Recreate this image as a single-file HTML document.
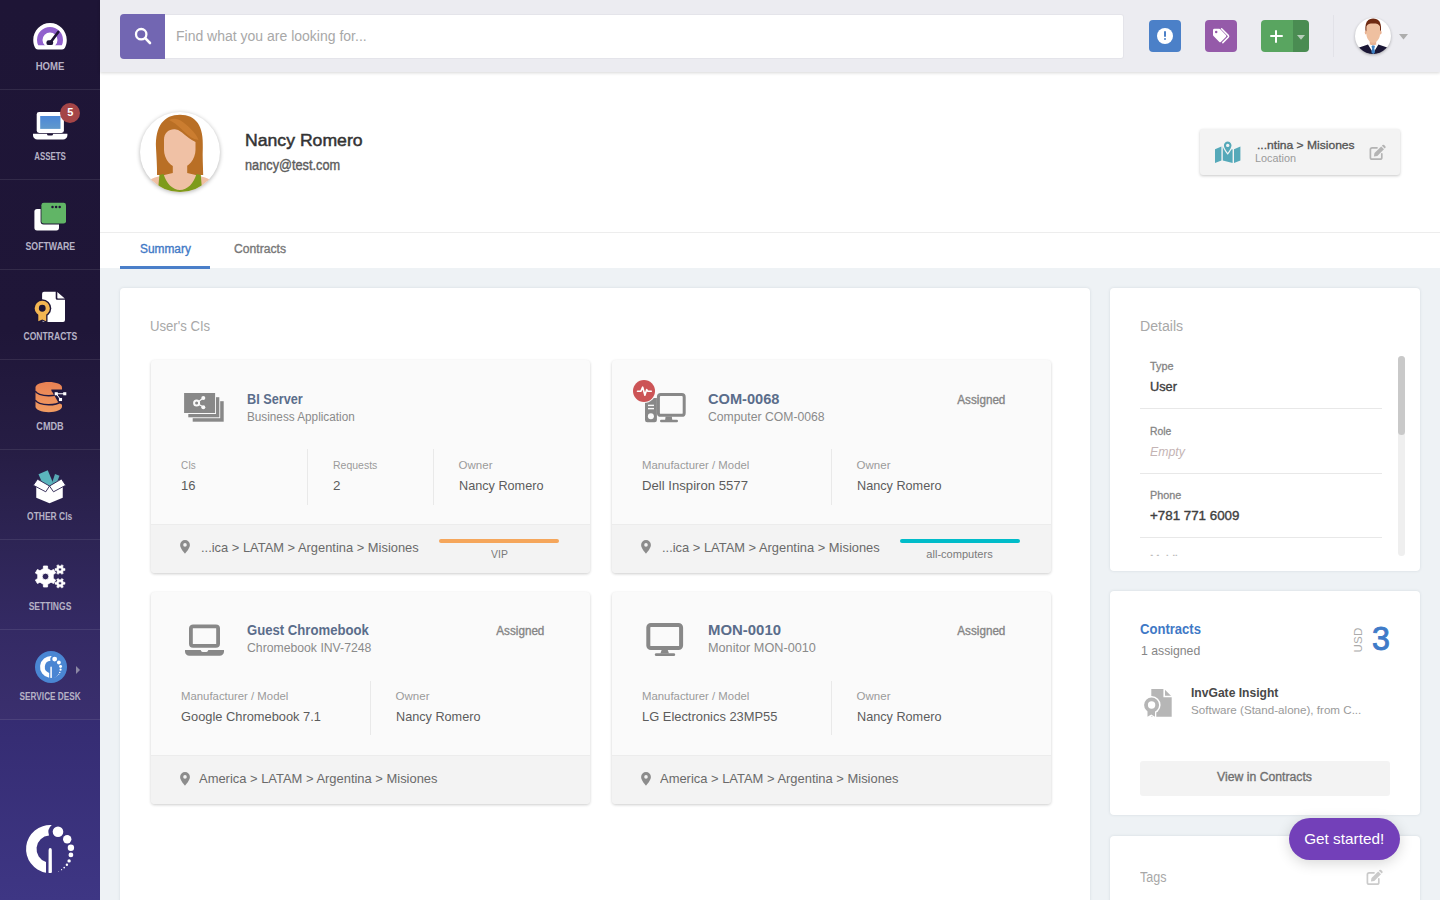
<!DOCTYPE html>
<html lang="en">
<head>
<meta charset="utf-8">
<title>Nancy Romero - Insight</title>
<style>
*{box-sizing:border-box;margin:0;padding:0}
html,body{width:1440px;height:900px;overflow:hidden}
body{font-family:"Liberation Sans",sans-serif;background:#eef2f5;color:#4a4a4a;position:relative;font-size:13px}
.t{position:absolute;white-space:nowrap;line-height:20px;height:20px;display:block}
.a{position:absolute}
svg{position:absolute;overflow:visible}
#side{position:absolute;left:0;top:0;width:100px;height:900px;background:linear-gradient(180deg,#1e1536 0px,#1f1638 330px,#261d44 450px,#2d2454 540px,#342a64 630px,#3a2f6e 719.5px,#352c72 720px,#3e3684 900px)}
.nsep{position:absolute;left:0;width:100px;height:1px;background:rgba(255,255,255,.09)}
#top{position:absolute;left:100px;top:0;width:1340px;height:72px;background:#ececf1;box-shadow:0 1px 3px rgba(0,0,0,.16)}
#head{position:absolute;left:100px;top:72px;width:1340px;height:196px;background:#fff}
.card{position:absolute;background:#fff;border-radius:4px;box-shadow:0 0 3px rgba(40,60,80,.13)}
.ci{position:absolute;width:439px;background:#fafafa;border-radius:4px;box-shadow:0 1px 3px rgba(0,0,0,.2)}
.foot{position:absolute;left:0;bottom:0;width:439px;background:#f3f3f3;border-radius:0 0 4px 4px;border-top:1px solid #ececec}
.vl{position:absolute;width:1px;background:#e9e9e9}
.hl{position:absolute;height:1px;background:#e8e8e8}
</style>
</head>
<body>
<nav>
<div id="side">
<div class="nsep" style="top:89px"></div>
<div class="nsep" style="top:179px"></div>
<div class="nsep" style="top:269px"></div>
<div class="nsep" style="top:359px"></div>
<div class="nsep" style="top:449px"></div>
<div class="nsep" style="top:539px"></div>
<div class="nsep" style="top:629px"></div>
<div class="nsep" style="top:719px"></div>
<svg style="left:33px;top:23px" width="34" height="27" viewBox="0 0 34 27">
<defs><clipPath id="hc"><rect x="0" y="0" width="34" height="22.250"/></clipPath></defs>
<path d="M17 0C7.700 0 .25 7.600 .25 17c0 2.700.6 5.200 1.700 7.500C2.500 25.700 3.600 26.500 4.900 26.500h24.200c1.300 0 2.400-.8 2.950-2C33.150 22.200 33.750 19.700 33.750 17 33.750 7.600 26.300 0 17 0z" fill="#fff"/>
<circle cx="17" cy="17" r="10.250" fill="none" stroke="#9161cd" stroke-width="5.500" clip-path="url(#hc)"/>
<path d="M17.600 19.200L25.300 9" stroke="#1e1536" stroke-width="2.700" stroke-linecap="round"/>
<rect x="13.400" y="17.200" width="6.800" height="4.900" rx="2.200" fill="#1e1536"/>
</svg>
<span class="t" style="left:35.00px;top:56.53px;font-size:10px;color:#b6b2c6;transform:scaleX(0.9567);transform-origin:50% 50%;font-weight:bold;">HOME</span>
<svg style="left:33px;top:112px" width="35" height="28" viewBox="0 0 35 28">
<defs><linearGradient id="ag" x1="0" y1="0" x2="0" y2="1"><stop offset="0" stop-color="#4c88d8"/><stop offset="1" stop-color="#6099cc"/></linearGradient></defs>
<rect x="3.700" y="0" width="27.200" height="21" rx="2.400" fill="#fff"/>
<rect x="7.200" y="4" width="20.300" height="12.900" fill="url(#ag)"/>
<path d="M0 21.800h34.400v1.400a4.400 4.400 0 0 1-4.400 4.400H4.400A4.400 4.400 0 0 1 0 23.200z" fill="#fff"/>
<path d="M14 21.600h6.100v.4a1.600 1.600 0 0 1-1.600 1.600h-2.900a1.600 1.600 0 0 1-1.600-1.600z" fill="#1e1536"/>
</svg>
<div class="a" style="left:60.100px;top:102.800px;width:19.800px;height:19.800px;border-radius:10px;background:#a54547"></div>
<span class="t" style="left:67.24px;top:102.49px;font-size:11px;color:#fff;font-weight:bold;">5</span>
<span class="t" style="left:30.00px;top:146.53px;font-size:10px;color:#b6b2c6;transform:scaleX(0.7923);transform-origin:50% 50%;font-weight:bold;">ASSETS</span>
<svg style="left:34px;top:202px" width="33" height="29" viewBox="0 0 33 29">
<rect x=".4" y="7" width="24.6" height="21.4" rx="2.6" fill="#fff"/>
<rect x="6.6" y=".2" width="25.8" height="22.2" rx="3" fill="#1e1536"/>
<rect x="7.4" y=".8" width="24.6" height="20.8" rx="2.4" fill="#61b566"/>
<circle cx="18.500" cy="5" r="1.250" fill="#1e1536"/><circle cx="22.100" cy="5" r="1.250" fill="#1e1536"/><circle cx="25.700" cy="5" r="1.250" fill="#1e1536"/>
</svg>
<span class="t" style="left:21.67px;top:236.53px;font-size:10px;color:#b6b2c6;transform:scaleX(0.8771);transform-origin:50% 50%;font-weight:bold;">SOFTWARE</span>
<svg style="left:33px;top:292px" width="34" height="31" viewBox="0 0 34 31">
<path d="M11 -.2H22.700V6.300a1.500 1.500 0 0 0 1.500 1.500H32V28.100a1.900 1.900 0 0 1-1.900 1.900H11a1.900 1.900 0 0 1-1.900-1.900V1.700A1.900 1.900 0 0 1 11-.2z" fill="#fff"/>
<path d="M24.300 -.1L31.800 6.400H24.900a.6 .6 0 0 1-.6-.6z" fill="#fff"/>
<circle cx="9.250" cy="16.250" r="9" fill="#1e1536"/>
<path d="M4 20V31.200L9.250 28.800 14.500 31.200V20z" fill="#1e1536"/>
<path d="M5.300 21V29.300L9.250 27.600 13.200 29.300V21z" fill="#f3b552"/>
<circle cx="9.250" cy="16.250" r="5.500" fill="none" stroke="#f3b552" stroke-width="4.200"/>
</svg>
<span class="t" style="left:18.61px;top:326.54px;font-size:10px;color:#b6b2c6;transform:scaleX(0.8555);transform-origin:50% 50%;font-weight:bold;">CONTRACTS</span>
<svg style="left:35px;top:382px" width="32" height="31" viewBox="0 0 32 31">
<defs><linearGradient id="cg" x1="0" y1="0" x2="0" y2="1"><stop offset="0" stop-color="#e98153"/><stop offset="1" stop-color="#f19c62"/></linearGradient></defs>
<path d="M.5 5.400C.5 2.400 6.400 0 13.750 0S27 2.400 27 5.400V24.800c0 3-5.900 5.400-13.250 5.400S.5 27.800 .5 24.800z" fill="url(#cg)"/>
<path d="M.2 9c1 2.600 6.500 4.800 13.550 4.800 3 0 5.600-.4 7.800-1M.2 18c1 2.600 6.500 4.800 13.550 4.800 5.500 0 10-1.300 12.300-3.200" fill="none" stroke="#211940" stroke-width="1.500"/>
<path d="M16.300 7.400H28.500V23.200Q23.500 21.800 21.600 17.600L17.600 10.600Q16 9 16.300 7.400z" fill="#211940"/>
<path d="M21.250 11.750H29.750M21.250 11.750L25.500 17.500" stroke="#fff" stroke-width="1"/>
<rect x="19.700" y="10.200" width="3.100" height="3.100" fill="#fff"/><rect x="28.200" y="10.200" width="3.100" height="3.100" fill="#fff"/><rect x="23.950" y="15.950" width="3.100" height="3.100" fill="#fff"/>
</svg>
<span class="t" style="left:35.00px;top:416.54px;font-size:10px;color:#b6b2c6;transform:scaleX(0.9101);transform-origin:50% 50%;font-weight:bold;">CMDB</span>
<svg style="left:34px;top:471px" width="31" height="33" viewBox="0 0 31 33">
<path d="M4.500 3.250L13.750 -.75 19.500 13 10.500 17z" fill="#5bb5bd"/>
<path d="M21 3L25.500 4.750 22.500 12.500 18 12z" fill="#58a8b5"/>
<path d="M3.750 8.500L8 10.500 8 14 3.750 12zM27.250 8.250L23 10.250 23 14 27.250 12z" fill="#ebe9f1"/>
<path d="M2.250 16L15.500 15.200 28.750 16V26.750L15.500 32.250 2.250 26.750z" fill="#fff"/>
<path d="M-.7 14.250L3.500 8.200 15.500 15 11.750 20.800z" fill="#fff" stroke="#2a214f" stroke-width=".9" stroke-linejoin="round"/>
<path d="M31.700 14.250L27.500 8 15.500 15 19.500 20.800z" fill="#fff" stroke="#2a214f" stroke-width=".9" stroke-linejoin="round"/>
</svg>
<span class="t" style="left:23.33px;top:506.54px;font-size:10px;color:#b6b2c6;transform:scaleX(0.8455);transform-origin:50% 50%;font-weight:bold;">OTHER CIs</span>
<svg style="left:0;top:540px" width="100" height="90" viewBox="0 540 100 90">
<path d="M47.69 584.20 L47.55 587.00 L43.45 587.00 L43.31 584.20 L39.93 582.24 L37.43 583.53 L35.38 579.98 L37.74 578.45 L37.74 574.55 L35.38 573.02 L37.43 569.47 L39.93 570.76 L43.31 568.80 L43.45 566.00 L47.55 566.00 L47.69 568.80 L51.07 570.76 L53.57 569.47 L55.62 573.02 L53.26 574.55 L53.26 578.45 L55.62 579.98 L53.57 583.53 L51.07 582.24Z M48.80 576.50 A3.3 3.3 0 1 0 42.20 576.50 A3.3 3.3 0 1 0 48.80 576.50Z" fill="#fff" fill-rule="evenodd" stroke="#fff" stroke-width=".8" stroke-linejoin="round"/>
<path d="M63.56 568.49 L65.01 568.52 L65.01 570.48 L63.56 570.51 L62.66 572.08 L63.35 573.35 L61.66 574.32 L60.90 573.09 L59.10 573.09 L58.34 574.32 L56.65 573.35 L57.34 572.08 L56.44 570.51 L54.99 570.48 L54.99 568.52 L56.44 568.49 L57.34 566.92 L56.65 565.65 L58.34 564.68 L59.10 565.91 L60.90 565.91 L61.66 564.68 L63.35 565.65 L62.66 566.92Z M61.45 569.50 A1.45 1.45 0 1 0 58.55 569.50 A1.45 1.45 0 1 0 61.45 569.50Z" fill="#fff" fill-rule="evenodd" stroke="#fff" stroke-width=".5" stroke-linejoin="round"/>
<path d="M63.56 582.24 L65.01 582.27 L65.01 584.23 L63.56 584.26 L62.66 585.83 L63.35 587.10 L61.66 588.07 L60.90 586.84 L59.10 586.84 L58.34 588.07 L56.65 587.10 L57.34 585.83 L56.44 584.26 L54.99 584.23 L54.99 582.27 L56.44 582.24 L57.34 580.67 L56.65 579.40 L58.34 578.43 L59.10 579.66 L60.90 579.66 L61.66 578.43 L63.35 579.40 L62.66 580.67Z M61.45 583.25 A1.45 1.45 0 1 0 58.55 583.25 A1.45 1.45 0 1 0 61.45 583.25Z" fill="#fff" fill-rule="evenodd" stroke="#fff" stroke-width=".5" stroke-linejoin="round"/>
</svg>
<span class="t" style="left:25.00px;top:596.53px;font-size:10px;color:#b6b2c6;transform:scaleX(0.8539);transform-origin:50% 50%;font-weight:bold;">SETTINGS</span>
<div class="a" style="left:35px;top:651px;width:32px;height:32px;border-radius:16px;background:#4a86d3"></div>
<svg style="left:40px;top:656px" width="22" height="22" viewBox="0 0 48 48" fill="#fff"><path d="M25.8 .07 A24 24 0 0 0 20 47.66 L20 36.9 A13.5 13.5 0 0 1 23 10.55 A9.5 9.5 0 0 1 25.8 .07Z"/>
<path d="M22.6 25.2 Q22.6 23 24.2 23 Q25.8 23 25.8 25 L25.9 47.4 Q24.2 48.3 22.5 47.7Z"/>
<circle cx="32" cy="6.8" r="5.3"/><circle cx="41.2" cy="14.2" r="4.2"/><circle cx="44.9" cy="22.8" r="3.2"/><circle cx="44.9" cy="29.9" r="2.4"/><circle cx="43.1" cy="35.9" r="1.7"/><circle cx="40.9" cy="39.7" r="1.2"/><circle cx="38.2" cy="42.6" r=".85"/><circle cx="35.6" cy="44.7" r=".6"/><circle cx="32.7" cy="46.3" r=".4"/></svg>
<svg style="left:76px;top:665.500px" width="4" height="8" viewBox="0 0 4 8"><path d="M0 0L4 4 0 8z" fill="#8c88a4"/></svg>
<span class="t" style="left:12.86px;top:686.53px;font-size:10px;color:#b6b2c6;transform:scaleX(0.8225);transform-origin:50% 50%;font-weight:bold;">SERVICE DESK</span>
<svg style="left:26px;top:825px" width="48" height="48" viewBox="0 0 48 48" fill="#fff"><path d="M25.8 .07 A24 24 0 0 0 20 47.66 L20 36.9 A13.5 13.5 0 0 1 23 10.55 A9.5 9.5 0 0 1 25.8 .07Z"/>
<path d="M22.6 25.2 Q22.6 23 24.2 23 Q25.8 23 25.8 25 L25.9 47.4 Q24.2 48.3 22.5 47.7Z"/>
<circle cx="32" cy="6.8" r="5.3"/><circle cx="41.2" cy="14.2" r="4.2"/><circle cx="44.9" cy="22.8" r="3.2"/><circle cx="44.9" cy="29.9" r="2.4"/><circle cx="43.1" cy="35.9" r="1.7"/><circle cx="40.9" cy="39.7" r="1.2"/><circle cx="38.2" cy="42.6" r=".85"/><circle cx="35.6" cy="44.7" r=".6"/><circle cx="32.7" cy="46.3" r=".4"/></svg>
</div>
</nav>
<section>
<div id="head"></div>
<div class="a" style="left:100px;top:232px;width:1340px;height:1px;background:#ededed"></div>
<div class="a" style="left:120px;top:266px;width:90px;height:2.500px;background:#4a7fc9"></div>
<div class="a" style="left:140px;top:111.500px;width:80px;height:80px;border-radius:40px;background:#fff;box-shadow:0 1px 4px rgba(0,0,0,.3);overflow:hidden">
<svg style="left:0;top:0" width="80" height="80" viewBox="0 0 80 80">
<path d="M16 36C15 14 24 2.800 40 2.800S64 14 62.800 36c-.4 8 .2 18 .4 27H17c.2-9-.6-19-1-27z" fill="#b96f25"/>
<path d="M10 67.500c6-3 14-4.500 22.800-6.500V50h14.400v11c8.800 2 16.800 3.500 22.800 6.500L74 84H6z" fill="#efc0a4"/>
<path d="M19.400 63c3-.8 3.600-.9 4.200-1 2.400 9 9 16 16.400 16s14-7 16.400-16l4.400 1L62.500 84h-45z" fill="#7e9b1b"/>
<path d="M24 28C24 20 30 16.500 36 17.500c6 1 9 7.500 19.500 12.500v8c0 9-7 18-15.700 18S24 47 24 38z" fill="#f0c1a5"/>
<path d="M29 8c4-2 9-1.500 13 1.500S56 20 58.500 28c-6-1-10-4-14-8S34 10 29 8z" fill="#cb7d30"/>
</svg></div>
<span class="t" style="left:245.38px;top:130.61px;font-size:17px;color:#333;transform:scaleX(1.0372);transform-origin:0 50%;-webkit-text-stroke:0.48px #333;">Nancy Romero</span>
<span class="t" style="left:245.35px;top:155.15px;font-size:14px;color:#5c5c5c;transform:scaleX(0.9101);transform-origin:0 50%;-webkit-text-stroke:0.39px #5c5c5c;">nancy@test.com</span>
<span class="t" style="left:139.58px;top:238.67px;font-size:12.5px;color:#3f79c6;transform:scaleX(0.9513);transform-origin:0 50%;-webkit-text-stroke:0.35px #3f79c6;">Summary</span>
<span class="t" style="left:234.27px;top:238.67px;font-size:12.5px;color:#777;transform:scaleX(0.9717);transform-origin:0 50%;-webkit-text-stroke:0.35px #777;">Contracts</span>
<div class="a" style="left:1200px;top:129px;width:200px;height:46px;border-radius:3px;background:#f3f3f3;box-shadow:0 1px 3px rgba(0,0,0,.22)"></div>
<svg style="left:1214.500px;top:141px" width="26" height="22" viewBox="0 0 26 22">
<path d="M0 8.200l6.400-2.600V19.400L0 22zM25.400 5.600L19 8.200V22l6.400-2.600zM7.800 5.400V19.600l9.800 2.400V8.200l-3 .2-1.900 3.400-2-3.800z" fill="#55a9b9"/>
<path d="M12.700 0a4.400 4.400 0 0 0-4.400 4.400c0 2.700 4.400 8.400 4.400 8.400s4.400-5.700 4.400-8.400A4.400 4.400 0 0 0 12.700 0z" fill="#55a9b9" stroke="#f3f3f3" stroke-width="1.200"/>
<circle cx="12.700" cy="4.400" r="1.700" fill="#f3f3f3"/>
</svg>
<span class="t" style="left:1256.58px;top:135.32px;font-size:11.5px;color:#555;transform:scaleX(1.0495);transform-origin:0 50%;-webkit-text-stroke:0.32px #555;">...ntina &gt; Misiones</span>
<span class="t" style="left:1255.22px;top:148.46px;font-size:10.5px;color:#9a9a9a;transform:scaleX(1.0312);transform-origin:0 50%;">Location</span>
<svg style="left:1368.6px;top:143.5px" width="17" height="17" viewBox="0 0 17 17"><path d="M12.800 9.800V13.400a1.800 1.800 0 0 1-1.800 1.800H3.200A1.800 1.800 0 0 1 1.400 13.400V5.600A1.800 1.800 0 0 1 3.200 3.800H8" fill="none" stroke="#b4b4b4" stroke-width="1.700" stroke-linecap="round"/><g transform="translate(-.9 .5)"><path d="M6.400 8.600l6.700-6.700 2.800 2.800-6.700 6.700-3.400 .6z" fill="#b4b4b4"/><path d="M13.800 1.200l.6-.6a1.200 1.200 0 0 1 1.700 0l1.100 1.100a1.200 1.200 0 0 1 0 1.700l-.6 .6z" fill="#b4b4b4"/></g></svg>
</section>
<header>
<div id="top"></div>
<div class="a" style="left:120px;top:13.5px;width:45px;height:45px;background:#7266b2;border-radius:4px 0 0 4px"></div>
<div class="a" style="left:165px;top:13.5px;width:959px;height:45px;background:#fff;border-radius:0 3px 3px 0;border:1px solid #e4e4ea;border-left:0"></div>
<svg style="left:134px;top:27px" width="18" height="18" viewBox="0 0 18 18"><circle cx="7.200" cy="7.200" r="5.200" fill="none" stroke="#fff" stroke-width="2.300"/><path d="M11.200 11.200L16 16" stroke="#fff" stroke-width="2.600" stroke-linecap="round"/></svg>
<span class="t" style="left:176.01px;top:25.65px;font-size:14px;color:#a8a8a8;">Find what you are looking for...</span>
<div class="a" style="left:1149px;top:20px;width:32px;height:32px;border-radius:4px;background:#4b80c8"></div>
<div class="a" style="left:1156.500px;top:27.700px;width:16.500px;height:16.500px;border-radius:9px;background:#fff"></div>
<div class="a" style="left:1163.900px;top:31.300px;width:1.900px;height:6px;border-radius:1px;background:#4b80c8"></div>
<div class="a" style="left:1163.800px;top:38.400px;width:2.100px;height:2.100px;border-radius:1.100px;background:#4b80c8"></div>
<div class="a" style="left:1205px;top:20px;width:32px;height:32px;border-radius:4px;background:#955aa9"></div>
<svg style="left:1212px;top:28px" width="18" height="16" viewBox="0 0 18 16">
<path d="M9.600 .8l6.600 6.600a1.300 1.300 0 0 1 0 1.800l-5.400 5.400" fill="none" stroke="#fff" stroke-width="1.500" stroke-linecap="round"/>
<path d="M1 2.200A1.400 1.400 0 0 1 2.400 .8h4.800a1.600 1.600 0 0 1 1.100 .5l5.600 5.600a1.400 1.400 0 0 1 0 2l-4.800 4.800a1.400 1.400 0 0 1-2 0L1.500 8.100A1.600 1.600 0 0 1 1 7z" fill="#fff"/>
<circle cx="4.200" cy="4" r="1.250" fill="#955aa9"/>
</svg>
<div class="a" style="left:1261px;top:20px;width:32px;height:32px;border-radius:4px 0 0 4px;background:#59a560"></div>
<div class="a" style="left:1293px;top:20px;width:16px;height:32px;border-radius:0 4px 4px 0;background:#4a8c52"></div>
<div class="a" style="left:1269.800px;top:35px;width:13px;height:2.200px;background:#fff;border-radius:1px"></div>
<div class="a" style="left:1275.200px;top:29.600px;width:2.200px;height:13px;background:#fff;border-radius:1px"></div>
<svg style="left:1297px;top:34.600px" width="8" height="5" viewBox="0 0 8 5"><path d="M0 0h8L4 4.800z" fill="#b5cdb9"/></svg>
<div class="a" style="left:1333px;top:15px;width:1px;height:42px;background:#e2e2e8"></div>
<div class="a" style="left:1355.300px;top:17.500px;width:36px;height:36px;border-radius:18px;background:#fff;box-shadow:0 1px 3px rgba(0,0,0,.28);overflow:hidden">
<svg style="left:0;top:0" width="36" height="36" viewBox="0 0 36 36">
<path d="M12.200 27l5.800 2 5.800-2 1 9H11z" fill="#fff"/>
<rect x="14.800" y="21" width="6.400" height="6.500" fill="#e8b394"/>
<path d="M10.400 12C10 4 13 .6 18.200 .6S26.400 4 26 12l-.6 3H11z" fill="#6f2a12"/>
<ellipse cx="10.900" cy="14.600" rx="1.100" ry="2" fill="#e8b394"/><ellipse cx="25.500" cy="14.600" rx="1.100" ry="2" fill="#e8b394"/>
<path d="M11.400 8.500C12.500 6 14.500 5.600 18.200 5.600s5.700 .4 6.800 2.900v7.500c0 4.500-3.300 8.800-6.800 8.800s-6.800-4.300-6.800-8.800z" fill="#efc0a0"/>
<path d="M3.400 29.800l9.600-3.200 5.200 8.400 5.200-8.400 9.600 3.200L36 40H0z" fill="#1b1736"/>
<path d="M14.800 26.400l3.400 1.200 3.400-1.200-3.400 9z" fill="#fff"/>
<path d="M17 27.400h2.400l.6 1.600-.8 1 .9 4.200-1.900 2-1.900-2 .9-4.200-.8-1z" fill="#3f82c4"/>
</svg></div>
<svg style="left:1399px;top:33.600px" width="9" height="6" viewBox="0 0 9 6"><path d="M0 0h9L4.500 5.600z" fill="#adadad"/></svg>
</header>
<main>
<div class="card" style="left:120px;top:288px;width:970px;height:640px"></div>
<span class="t" style="left:150.34px;top:316.45px;font-size:14px;color:#a8a8a8;transform:scaleX(0.9385);transform-origin:0 50%;">User&#x27;s CIs</span>
<div class="ci" style="left:151px;top:360px;height:213px"><div class="foot" style="height:49.2px"></div></div>
<svg style="left:184px;top:393px" width="40" height="29" viewBox="0 0 40 29">
<rect x="8.700" y="8.200" width="31" height="20.500" fill="#888"/>
<rect x="3.300" y="3.200" width="32.900" height="22" fill="#fafafa"/>
<rect x="4.300" y="4.200" width="31" height="20.100" fill="#888"/>
<rect x="-.9" y="-1" width="32.900" height="22" fill="#fafafa"/>
<rect x=".1" y="0" width="31" height="20" fill="#888"/>
<path d="M12.600 10L19.300 5M12.600 10L19.300 14" stroke="#fafafa" stroke-width="1.100"/>
<circle cx="12.600" cy="10" r="2.500" fill="#888" stroke="#fafafa" stroke-width="2"/>
<circle cx="19.300" cy="5" r="2" fill="#fafafa"/><circle cx="19.300" cy="14.200" r="2" fill="#fafafa"/>
</svg>
<span class="t" style="left:246.86px;top:389.45px;font-size:14px;color:#5a6d8b;transform:scaleX(0.9073);transform-origin:0 50%;font-weight:bold;">BI Server</span>
<span class="t" style="left:246.59px;top:407.44px;font-size:12px;color:#8a8a8a;transform:scaleX(0.9784);transform-origin:0 50%;">Business Application</span>
<span class="t" style="left:180.65px;top:454.52px;font-size:11.5px;color:#9a9a9a;transform:scaleX(0.8583);transform-origin:0 50%;">CIs</span>
<span class="t" style="left:181.05px;top:476.12px;font-size:13.5px;color:#5c5c5c;transform:scaleX(0.9620);transform-origin:0 50%;">16</span>
<div class="vl" style="left:306.500px;top:449px;height:56px"></div><div class="vl" style="left:432.500px;top:449px;height:56px"></div>
<span class="t" style="left:332.63px;top:454.52px;font-size:11.5px;color:#9a9a9a;transform:scaleX(0.9119);transform-origin:0 50%;">Requests</span>
<span class="t" style="left:332.53px;top:476.12px;font-size:13.5px;color:#5c5c5c;transform:scaleX(0.9916);transform-origin:0 50%;">2</span>
<span class="t" style="left:458.60px;top:454.52px;font-size:11.5px;color:#9a9a9a;">Owner</span>
<span class="t" style="left:458.56px;top:476.12px;font-size:13.5px;color:#5c5c5c;transform:scaleX(0.9380);transform-origin:0 50%;">Nancy Romero</span>
<svg style="left:180.4px;top:540.3px" width="10" height="14" viewBox="0 0 10 14"><path d="M5 0A4.900 4.900 0 0 0 .1 4.900C.1 8.400 5 13.600 5 13.600s4.900-5.200 4.900-8.700A4.900 4.900 0 0 0 5 0zm0 6.700a1.800 1.800 0 1 1 0-3.600 1.800 1.800 0 0 1 0 3.600z" fill="#8c8c8c" fill-rule="evenodd"/></svg>
<span class="t" style="left:201.05px;top:537.82px;font-size:13.5px;color:#6a6a6a;transform:scaleX(0.9550);transform-origin:0 50%;">...ica &gt; LATAM &gt; Argentina &gt; Misiones</span>
<div class="a" style="left:439px;top:539px;width:120px;height:4px;border-radius:2px;background:#f5a65b"></div>
<span class="t" style="left:490.54px;top:544.16px;font-size:10.5px;color:#7a7a7a;transform:scaleX(0.9888);transform-origin:50% 50%;">VIP</span>
<div class="ci" style="left:612px;top:360px;height:213px"><div class="foot" style="height:49.2px"></div></div>
<svg style="left:645px;top:393px" width="41" height="30" viewBox="0 0 41 30">
<rect x="13.400" y="1.500" width="25.800" height="20.800" rx="2.400" fill="none" stroke="#888" stroke-width="3"/>
<path d="M20.600 23.500h6.200l.5 3.400h-7.200z" fill="#888"/>
<rect x="15" y="26.700" width="18" height="2.600" rx="1.300" fill="#888"/>
<path d="M0 7.500A2.500 2.500 0 0 1 2.500 5H11.900V27A2.300 2.300 0 0 1 9.600 29.300H2.300A2.300 2.300 0 0 1 0 27z" fill="#888"/>
<rect x="3" y="11.700" width="6" height="1.400" fill="#fafafa"/><rect x="3" y="14.900" width="6" height="1.400" fill="#fafafa"/>
<circle cx="5.900" cy="23.300" r="3" fill="#fafafa"/>
</svg>
<div class="a" style="left:631.700px;top:378.900px;width:24px;height:24px;border-radius:12px;background:#fafafa"></div>
<div class="a" style="left:632.700px;top:379.900px;width:22px;height:22px;border-radius:11px;background:#cc5456"></div>
<svg style="left:636.500px;top:385px" width="15" height="12" viewBox="0 0 15 12"><path d="M.5 6.300H3.800L5.700 2.200 7.900 10.300 9.700 4.600 10.900 6.300H14.300" fill="none" stroke="#fff" stroke-width="1.600" stroke-linejoin="round" stroke-linecap="round"/></svg>
<span class="t" style="left:707.69px;top:389.45px;font-size:14px;color:#5a6d8b;transform:scaleX(1.0440);transform-origin:0 50%;font-weight:bold;">COM-0068</span>
<span class="t" style="left:707.77px;top:407.44px;font-size:12px;color:#8a8a8a;transform:scaleX(1.0168);transform-origin:0 50%;">Computer COM-0068</span>
<span class="t" style="left:955.54px;top:390.04px;font-size:12px;color:#858585;transform:scaleX(0.9732);transform-origin:100% 50%;-webkit-text-stroke:0.34px #858585;">Assigned</span>
<span class="t" style="left:641.60px;top:454.52px;font-size:11.5px;color:#9a9a9a;transform:scaleX(0.9875);transform-origin:0 50%;">Manufacturer / Model</span>
<span class="t" style="left:641.54px;top:476.12px;font-size:13.5px;color:#5c5c5c;transform:scaleX(0.9736);transform-origin:0 50%;">Dell Inspiron 5577</span>
<div class="vl" style="left:830.500px;top:449px;height:56px"></div>
<span class="t" style="left:856.60px;top:454.52px;font-size:11.5px;color:#9a9a9a;">Owner</span>
<span class="t" style="left:856.56px;top:476.12px;font-size:13.5px;color:#5c5c5c;transform:scaleX(0.9380);transform-origin:0 50%;">Nancy Romero</span>
<svg style="left:641.4px;top:540.3px" width="10" height="14" viewBox="0 0 10 14"><path d="M5 0A4.900 4.900 0 0 0 .1 4.900C.1 8.400 5 13.600 5 13.600s4.900-5.200 4.900-8.700A4.900 4.900 0 0 0 5 0zm0 6.700a1.800 1.800 0 1 1 0-3.600 1.800 1.800 0 0 1 0 3.600z" fill="#8c8c8c" fill-rule="evenodd"/></svg>
<span class="t" style="left:662.05px;top:537.82px;font-size:13.5px;color:#6a6a6a;transform:scaleX(0.9550);transform-origin:0 50%;">...ica &gt; LATAM &gt; Argentina &gt; Misiones</span>
<div class="a" style="left:900px;top:539px;width:120px;height:4px;border-radius:2px;background:#00bcc9"></div>
<span class="t" style="left:928.49px;top:544.16px;font-size:10.5px;color:#7a7a7a;transform:scaleX(1.0526);transform-origin:50% 50%;">all-computers</span>
<div class="ci" style="left:151px;top:592px;height:212px"><div class="foot" style="height:49.2px"></div></div>
<svg style="left:185px;top:624px" width="39" height="32" viewBox="0 0 39 32">
<rect x="5.900" y="2.300" width="27.200" height="19.600" rx="2.200" fill="none" stroke="#888" stroke-width="3.800"/>
<path d="M0 25.900H15.600Q16.300 28 17.600 28H21.400Q22.700 28 23.400 25.900H39V27.400A4.300 4.300 0 0 1 34.700 31.700H4.300A4.300 4.300 0 0 1 0 27.400z" fill="#888"/>
</svg>
<span class="t" style="left:246.54px;top:620.45px;font-size:14px;color:#5a6d8b;transform:scaleX(0.9375);transform-origin:0 50%;font-weight:bold;">Guest Chromebook</span>
<span class="t" style="left:246.57px;top:638.04px;font-size:12px;color:#8a8a8a;transform:scaleX(1.0186);transform-origin:0 50%;">Chromebook INV-7248</span>
<span class="t" style="left:495.04px;top:621.14px;font-size:12px;color:#858585;transform:scaleX(0.9732);transform-origin:100% 50%;-webkit-text-stroke:0.34px #858585;">Assigned</span>
<span class="t" style="left:180.60px;top:685.62px;font-size:11.5px;color:#9a9a9a;transform:scaleX(0.9875);transform-origin:0 50%;">Manufacturer / Model</span>
<span class="t" style="left:180.55px;top:707.42px;font-size:13.5px;color:#5c5c5c;transform:scaleX(0.9514);transform-origin:0 50%;">Google Chromebook 7.1</span>
<div class="vl" style="left:370px;top:680.500px;height:54.500px"></div>
<span class="t" style="left:395.60px;top:685.62px;font-size:11.5px;color:#9a9a9a;">Owner</span>
<span class="t" style="left:395.56px;top:707.42px;font-size:13.5px;color:#5c5c5c;transform:scaleX(0.9380);transform-origin:0 50%;">Nancy Romero</span>
<svg style="left:180.4px;top:771.5px" width="10" height="14" viewBox="0 0 10 14"><path d="M5 0A4.900 4.900 0 0 0 .1 4.900C.1 8.400 5 13.600 5 13.600s4.900-5.200 4.900-8.700A4.900 4.900 0 0 0 5 0zm0 6.700a1.800 1.800 0 1 1 0-3.600 1.800 1.800 0 0 1 0 3.600z" fill="#8c8c8c" fill-rule="evenodd"/></svg>
<span class="t" style="left:198.55px;top:769.12px;font-size:13.5px;color:#6a6a6a;transform:scaleX(0.9580);transform-origin:0 50%;">America &gt; LATAM &gt; Argentina &gt; Misiones</span>
<div class="ci" style="left:612px;top:592px;height:212px"><div class="foot" style="height:49.2px"></div></div>
<svg style="left:646px;top:623px" width="38" height="34" viewBox="0 0 38 34">
<rect x="2.300" y="2" width="32.800" height="23" rx="2.600" fill="none" stroke="#888" stroke-width="4"/>
<path d="M15.800 26.500h5.800l1.400 4h-8.600z" fill="#888"/>
<rect x="8.800" y="30.200" width="20.400" height="2.900" rx="1.450" fill="#888"/>
</svg>
<span class="t" style="left:707.68px;top:620.45px;font-size:14px;color:#5a6d8b;transform:scaleX(1.0659);transform-origin:0 50%;font-weight:bold;">MON-0010</span>
<span class="t" style="left:707.76px;top:638.04px;font-size:12px;color:#8a8a8a;transform:scaleX(1.0569);transform-origin:0 50%;">Monitor MON-0010</span>
<span class="t" style="left:955.54px;top:621.14px;font-size:12px;color:#858585;transform:scaleX(0.9732);transform-origin:100% 50%;-webkit-text-stroke:0.34px #858585;">Assigned</span>
<span class="t" style="left:641.60px;top:685.62px;font-size:11.5px;color:#9a9a9a;transform:scaleX(0.9875);transform-origin:0 50%;">Manufacturer / Model</span>
<span class="t" style="left:641.55px;top:707.42px;font-size:13.5px;color:#5c5c5c;transform:scaleX(0.9551);transform-origin:0 50%;">LG Electronics 23MP55</span>
<div class="vl" style="left:830.500px;top:680.500px;height:54.500px"></div>
<span class="t" style="left:856.60px;top:685.62px;font-size:11.5px;color:#9a9a9a;">Owner</span>
<span class="t" style="left:856.56px;top:707.42px;font-size:13.5px;color:#5c5c5c;transform:scaleX(0.9380);transform-origin:0 50%;">Nancy Romero</span>
<svg style="left:641.4px;top:771.5px" width="10" height="14" viewBox="0 0 10 14"><path d="M5 0A4.900 4.900 0 0 0 .1 4.900C.1 8.400 5 13.600 5 13.600s4.900-5.200 4.900-8.700A4.900 4.900 0 0 0 5 0zm0 6.700a1.800 1.800 0 1 1 0-3.600 1.800 1.800 0 0 1 0 3.600z" fill="#8c8c8c" fill-rule="evenodd"/></svg>
<span class="t" style="left:659.55px;top:769.12px;font-size:13.5px;color:#6a6a6a;transform:scaleX(0.9580);transform-origin:0 50%;">America &gt; LATAM &gt; Argentina &gt; Misiones</span>
</main>
<aside>
<div class="card" style="left:1110px;top:288px;width:310px;height:282.500px"></div>
<span class="t" style="left:1140.31px;top:316.45px;font-size:14px;color:#a8a8a8;transform:scaleX(1.0090);transform-origin:0 50%;">Details</span>
<div class="a" style="left:1398px;top:356px;width:7px;height:199.500px;border-radius:3.500px;background:#efefef"></div>
<div class="a" style="left:1398px;top:356px;width:7px;height:79px;border-radius:3.500px;background:#c9c9c9"></div>
<span class="t" style="left:1150.12px;top:356.09px;font-size:11px;color:#858585;transform:scaleX(0.9842);transform-origin:0 50%;-webkit-text-stroke:0.31px #858585;">Type</span>
<span class="t" style="left:1150.05px;top:377.30px;font-size:13px;color:#404040;transform:scaleX(0.9804);transform-origin:0 50%;-webkit-text-stroke:0.36px #404040;">User</span>
<div class="hl" style="left:1140px;top:408px;width:242px"></div>
<span class="t" style="left:1150.14px;top:420.79px;font-size:11px;color:#858585;transform:scaleX(0.9402);transform-origin:0 50%;-webkit-text-stroke:0.31px #858585;">Role</span>
<span class="t" style="left:1150.07px;top:442.10px;font-size:13px;color:#c4b4b4;transform:scaleX(0.9476);transform-origin:0 50%;font-style:italic;">Empty</span>
<div class="hl" style="left:1140px;top:472.500px;width:242px"></div>
<span class="t" style="left:1150.12px;top:485.39px;font-size:11px;color:#858585;transform:scaleX(0.9831);transform-origin:0 50%;-webkit-text-stroke:0.31px #858585;">Phone</span>
<span class="t" style="left:1150.03px;top:506.30px;font-size:13px;color:#404040;transform:scaleX(1.0263);transform-origin:0 50%;-webkit-text-stroke:0.36px #404040;">+781 771 6009</span>
<div class="hl" style="left:1140px;top:537px;width:242px"></div>
<div class="a" style="left:1140px;top:553px;width:240px;height:3px;overflow:hidden"><span class="t" style="left:10.10px;top:-3.78px;font-size:11.5px;color:#bcbcbc;-webkit-text-stroke:0.32px #bcbcbc;">Mobile</span>
</div>
<div class="card" style="left:1110px;top:590.500px;width:310px;height:224px"></div>
<span class="t" style="left:1139.94px;top:618.65px;font-size:14px;color:#3f79c6;transform:scaleX(0.9332);transform-origin:0 50%;font-weight:bold;">Contracts</span>
<span class="t" style="left:1140.57px;top:641.00px;font-size:13px;color:#868686;transform:scaleX(0.9416);transform-origin:0 50%;">1 assigned</span>
<span class="t" style="left:1338.6px;top:629.6px;width:38px;text-align:center;font-size:11.5px;color:#ababab;transform:rotate(-90deg);transform-origin:50% 50%;letter-spacing:.2px">USD</span>
<span class="t" style="left:1371.87px;top:628.57px;font-size:33px;color:#3f7bc8;transform:scaleX(0.9759);transform-origin:0 50%;-webkit-text-stroke:0.92px #3f7bc8;">3</span>
<svg style="left:1143px;top:688.500px" width="30" height="29" viewBox="0 0 30 29">
<path d="M8.300 0H21.200L28.700 7.500V27.700H8.300z" fill="#b6b6b6"/>
<path d="M21.200 -.5V7.500H29.200" fill="none" stroke="#fff" stroke-width="1.600"/>
<circle cx="8.600" cy="16" r="9" fill="#fff"/>
<path d="M3.200 20V29.800L8.250 27 13.300 29.800V20z" fill="#fff"/>
<path d="M4.500 21V27.800L8.250 25.600 12 27.800V21z" fill="#b6b6b6"/>
<circle cx="8.600" cy="16" r="5.600" fill="none" stroke="#b6b6b6" stroke-width="3.800"/>
</svg>
<span class="t" style="left:1191.28px;top:683.37px;font-size:12.5px;color:#484848;transform:scaleX(0.9677);transform-origin:0 50%;font-weight:bold;">InvGate Insight</span>
<span class="t" style="left:1191.09px;top:699.82px;font-size:11.5px;color:#9a9a9a;transform:scaleX(1.0093);transform-origin:0 50%;">Software (Stand-alone), from C...</span>
<div class="a" style="left:1140px;top:760.500px;width:250px;height:35px;border-radius:3px;background:#f3f3f3"></div>
<span class="t" style="left:1216.48px;top:767.17px;font-size:12.5px;color:#707070;transform:scaleX(0.9778);transform-origin:50% 50%;-webkit-text-stroke:0.35px #707070;">View in Contracts</span>
<div class="card" style="left:1110px;top:835.500px;width:310px;height:100px"></div>
<span class="t" style="left:1140.36px;top:867.15px;font-size:14px;color:#a8a8a8;transform:scaleX(0.8954);transform-origin:0 50%;">Tags</span>
<svg style="left:1365.8px;top:869.3px" width="17" height="17" viewBox="0 0 17 17"><path d="M12.800 9.800V13.400a1.800 1.800 0 0 1-1.800 1.800H3.200A1.800 1.800 0 0 1 1.400 13.400V5.600A1.800 1.800 0 0 1 3.200 3.800H8" fill="none" stroke="#cbcbcb" stroke-width="1.700" stroke-linecap="round"/><g transform="translate(-.9 .5)"><path d="M6.400 8.600l6.700-6.700 2.800 2.800-6.700 6.700-3.400 .6z" fill="#cbcbcb"/><path d="M13.800 1.200l.6-.6a1.200 1.200 0 0 1 1.700 0l1.100 1.100a1.200 1.200 0 0 1 0 1.700l-.6 .6z" fill="#cbcbcb"/></g></svg>
<div class="a" style="left:1289px;top:818px;width:111px;height:42px;border-radius:21px;background:#7340b9;box-shadow:0 3px 14px rgba(0,0,0,.16)"></div>
<span class="t" style="left:1305.32px;top:828.60px;font-size:15px;color:#fff;transform:scaleX(1.0214);transform-origin:50% 50%;">Get started!</span>
</aside>
</body>
</html>
